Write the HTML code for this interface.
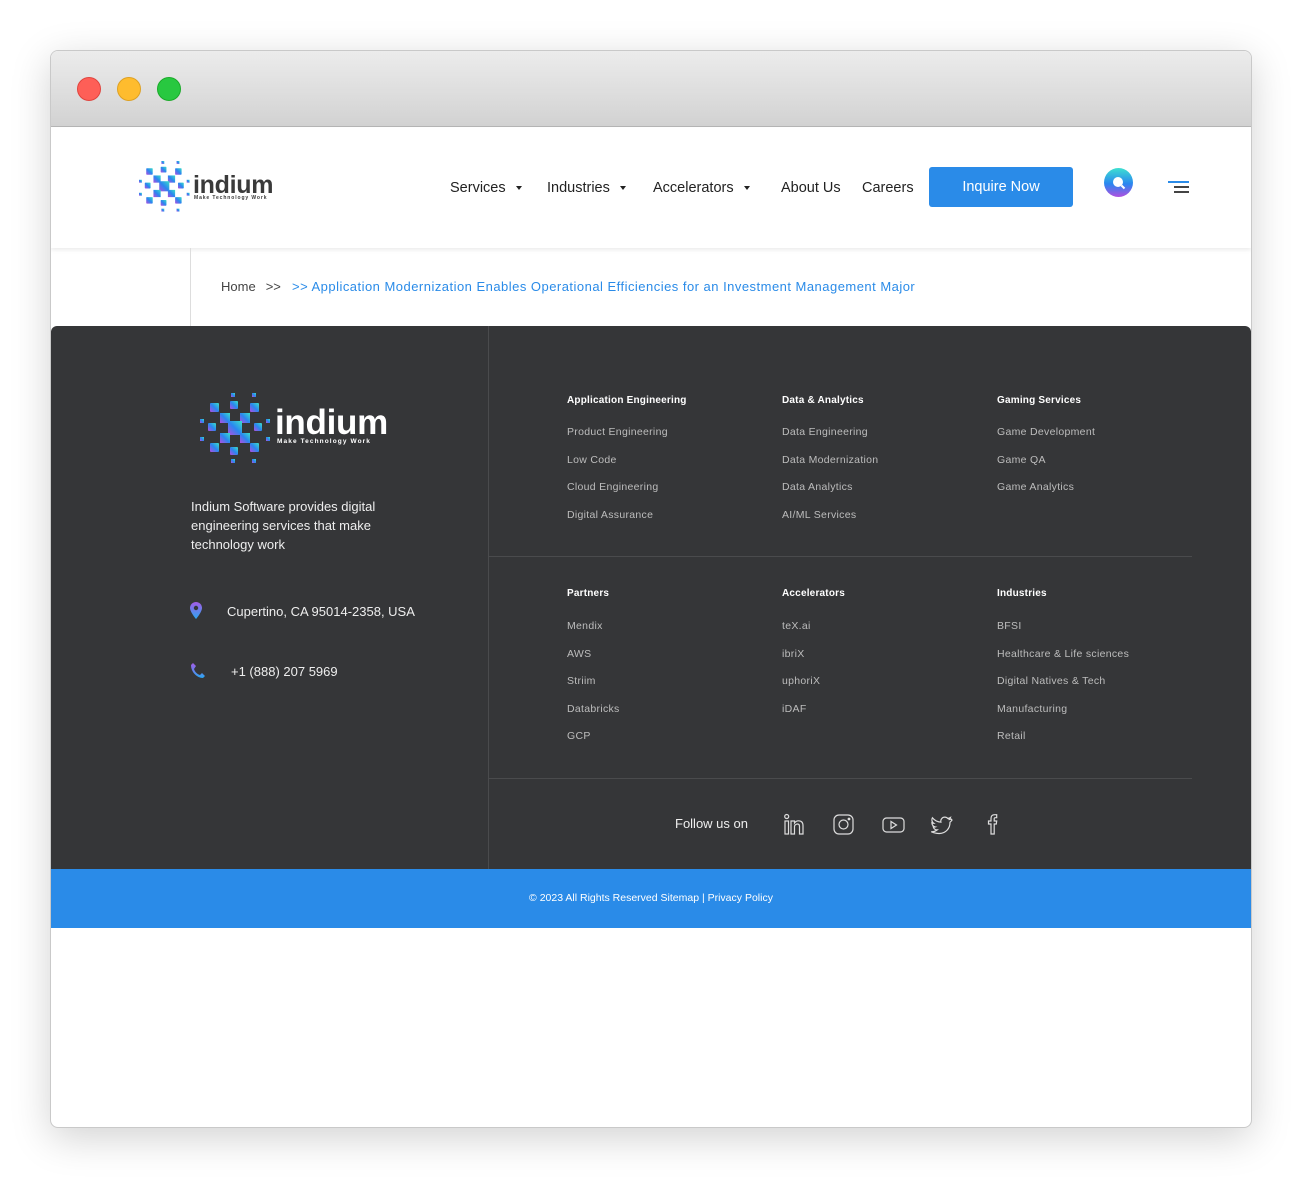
<!DOCTYPE html>
<html><head><meta charset="utf-8"><style>
*{margin:0;padding:0;box-sizing:border-box}
body{width:1302px;height:1178px;background:#fff;font-family:"Liberation Sans",sans-serif;position:relative;overflow:hidden}
.a{position:absolute;white-space:nowrap}
.win{position:absolute;left:50px;top:50px;width:1202px;height:1078px;border:1px solid #c9c9c9;border-radius:8px;overflow:hidden;box-shadow:0 10px 40px rgba(0,0,0,.18);background:#fff}
.tb{position:absolute;left:0;top:0;width:100%;height:76px;background:linear-gradient(#ececec,#d2d2d2);border-bottom:1px solid #b5b5b5}
.dot{position:absolute;top:26px;width:24px;height:24px;border-radius:50%}
.nav{font-size:14.5px;color:#222;top:129px}
.caret{display:inline-block;width:0;height:0;border-left:3px solid transparent;border-right:3px solid transparent;border-top:4px solid #222;margin-left:10px;vertical-align:middle}
.foot{position:absolute;left:0;top:275px;width:100%;height:543px;background:#353638;border-radius:6px 6px 0 0}
.h{font-size:10px;font-weight:bold;color:#fff;letter-spacing:.2px}
.l{font-size:10.5px;color:#bdbdbd;letter-spacing:.3px}
</style></head><body>
<div class="win">
<div class="tb">
<div class="dot" style="left:26px;background:#fe5f57;border:1px solid #e0443e"></div>
<div class="dot" style="left:66px;background:#febc2e;border:1px solid #dea123"></div>
<div class="dot" style="left:106px;background:#28c840;border:1px solid #1aab29"></div>
</div>
<div class="a" style="left:0;top:77px;width:100%;height:120px;background:#fff;box-shadow:0 2px 4px rgba(0,0,0,.08)"></div>
<svg class="a" style="left:88px;top:110px" width="52" height="52" viewBox="0 0 72 72">
<defs><linearGradient id="g" x1="1" y1="0" x2="0" y2="1"><stop offset="0" stop-color="#3be0c8"/><stop offset=".5" stop-color="#2a86f0"/><stop offset="1" stop-color="#b24fe0"/></linearGradient></defs>
<g fill="url(#g)"><rect x="31" y="0" width="4" height="4"/><rect x="52" y="0" width="4" height="4"/><rect x="0" y="26" width="4" height="4"/><rect x="66" y="26" width="4" height="4"/><rect x="0" y="44" width="4" height="4"/><rect x="66" y="44" width="4" height="4"/><rect x="31" y="66" width="4" height="4"/><rect x="52" y="66" width="4" height="4"/>
<rect x="10" y="10" width="9" height="9" rx="1"/><rect x="30" y="8" width="8" height="8" rx="1"/><rect x="50" y="10" width="9" height="9" rx="1"/><rect x="20" y="20" width="10" height="10"/><rect x="40" y="20" width="10" height="10"/><rect x="28" y="28" width="14" height="14"/><rect x="20" y="40" width="10" height="10"/><rect x="40" y="40" width="10" height="10"/><rect x="10" y="50" width="9" height="9" rx="1"/><rect x="30" y="54" width="8" height="8" rx="1"/><rect x="50" y="50" width="9" height="9" rx="1"/><rect x="8" y="30" width="8" height="8" rx="1"/><rect x="54" y="30" width="8" height="8" rx="1"/></g></svg>
<div class="a" style="left:142px;top:120px;font-size:25px;font-weight:bold;color:#3a3a3a;letter-spacing:-.3px">indium</div>
<div class="a" style="left:143px;top:144px;font-size:5px;font-weight:bold;color:#3a3a3a;letter-spacing:.9px">Make Technology Work</div>
<div class="a nav" style="left:399px">Services<span class="caret"></span></div>
<div class="a nav" style="left:496px">Industries<span class="caret"></span></div>
<div class="a nav" style="left:602px">Accelerators<span class="caret"></span></div>
<div class="a nav" style="left:730px">About Us</div>
<div class="a nav" style="left:811px">Careers</div>
<div class="a" style="left:878px;top:116px;width:144px;height:40px;background:#2a8be8;border-radius:3px;color:#fff;font-size:14.5px;text-align:center;line-height:40px">Inquire Now</div>
<div class="a" style="left:1053px;top:117px;width:29px;height:29px;border-radius:50%;background:linear-gradient(#3ee0d0,#2a86f0 55%,#b04fe0)"></div>
<svg class="a" style="left:1059px;top:123px" width="18" height="18" viewBox="0 0 18 18"><circle cx="8" cy="8" r="5" fill="#fff"/><path d="M11.5 11.5l3 3" stroke="#fff" stroke-width="2"/></svg>
<div class="a" style="left:1117px;top:130px;width:21px;height:2px;background:#2a8be8"></div>
<div class="a" style="left:1123px;top:135px;width:15px;height:2px;background:#444"></div>
<div class="a" style="left:1123px;top:140px;width:15px;height:2px;background:#444"></div>
<div class="a" style="left:139px;top:197px;width:1px;height:80px;background:#ddd"></div>
<div class="a" style="left:170px;top:228px;font-size:13px;color:#444">Home<span style="margin-left:10px">&gt;&gt;</span></div>
<div class="a" style="left:241px;top:228px;font-size:13px;color:#2a8be8;letter-spacing:.48px">&gt;&gt; Application Modernization Enables Operational Efficiencies for an Investment Management Major</div>
<div class="foot">
<div class="a" style="left:437px;top:0;width:1px;height:543px;background:#4a4b4d"></div>
<div class="a" style="left:438px;top:230px;width:703px;height:1px;background:#4a4b4d"></div>
<div class="a" style="left:438px;top:452px;width:703px;height:1px;background:#4a4b4d"></div>
<svg class="a" style="left:149px;top:67px" width="72" height="72" viewBox="0 0 72 72">
<g fill="url(#g)"><rect x="31" y="0" width="4" height="4"/><rect x="52" y="0" width="4" height="4"/><rect x="0" y="26" width="4" height="4"/><rect x="66" y="26" width="4" height="4"/><rect x="0" y="44" width="4" height="4"/><rect x="66" y="44" width="4" height="4"/><rect x="31" y="66" width="4" height="4"/><rect x="52" y="66" width="4" height="4"/>
<rect x="10" y="10" width="9" height="9" rx="1"/><rect x="30" y="8" width="8" height="8" rx="1"/><rect x="50" y="10" width="9" height="9" rx="1"/><rect x="20" y="20" width="10" height="10"/><rect x="40" y="20" width="10" height="10"/><rect x="28" y="28" width="14" height="14"/><rect x="20" y="40" width="10" height="10"/><rect x="40" y="40" width="10" height="10"/><rect x="10" y="50" width="9" height="9" rx="1"/><rect x="30" y="54" width="8" height="8" rx="1"/><rect x="50" y="50" width="9" height="9" rx="1"/><rect x="8" y="30" width="8" height="8" rx="1"/><rect x="54" y="30" width="8" height="8" rx="1"/></g></svg>
<div class="a" style="left:224px;top:77px;font-size:35px;font-weight:bold;color:#fff;letter-spacing:-.3px">indium</div>
<div class="a" style="left:226px;top:112px;font-size:6.5px;font-weight:bold;color:#fff;letter-spacing:1.1px">Make Technology Work</div>
<div class="a" style="left:140px;top:171px;font-size:13px;color:#eee;line-height:19px;white-space:normal;width:225px">Indium Software provides digital engineering services that make technology work</div>
<svg class="a" style="left:139px;top:276px" width="12" height="17" viewBox="0 0 12 17"><defs><linearGradient id="p" x1="0" y1="0" x2="0" y2="1"><stop offset="0" stop-color="#a45be6"/><stop offset="1" stop-color="#2aa6f0"/></linearGradient></defs><path d="M6 0a6 6 0 0 0-6 6c0 4 6 11 6 11s6-7 6-11a6 6 0 0 0-6-6z" fill="url(#p)"/><circle cx="6" cy="6" r="2.2" fill="#353638"/></svg>
<div class="a" style="left:176px;top:278px;font-size:13px;color:#eee">Cupertino, CA 95014-2358, USA</div>
<svg class="a" style="left:139px;top:336px" width="17" height="17" viewBox="0 0 17 17"><path d="M3 1l3 3-2 3c1 3 3 5 6 6l2-2 3 3-2 2C7 16 1 10 1 3z" fill="url(#p)"/></svg>
<div class="a" style="left:180px;top:338px;font-size:13px;color:#eee">+1 (888) 207 5969</div>
<div class="a h" style="left:516px;top:69px">Application Engineering</div>
<div class="a l" style="left:516px;top:100px">Product Engineering</div>
<div class="a l" style="left:516px;top:128px">Low Code</div>
<div class="a l" style="left:516px;top:155px">Cloud Engineering</div>
<div class="a l" style="left:516px;top:183px">Digital Assurance</div>
<div class="a h" style="left:731px;top:69px">Data &amp; Analytics</div>
<div class="a l" style="left:731px;top:100px">Data Engineering</div>
<div class="a l" style="left:731px;top:128px">Data Modernization</div>
<div class="a l" style="left:731px;top:155px">Data Analytics</div>
<div class="a l" style="left:731px;top:183px">AI/ML Services</div>
<div class="a h" style="left:946px;top:69px">Gaming Services</div>
<div class="a l" style="left:946px;top:100px">Game Development</div>
<div class="a l" style="left:946px;top:128px">Game QA</div>
<div class="a l" style="left:946px;top:155px">Game Analytics</div>
<div class="a h" style="left:516px;top:262px">Partners</div>
<div class="a l" style="left:516px;top:294px">Mendix</div>
<div class="a l" style="left:516px;top:322px">AWS</div>
<div class="a l" style="left:516px;top:349px">Striim</div>
<div class="a l" style="left:516px;top:377px">Databricks</div>
<div class="a l" style="left:516px;top:404px">GCP</div>
<div class="a h" style="left:731px;top:262px">Accelerators</div>
<div class="a l" style="left:731px;top:294px">teX.ai</div>
<div class="a l" style="left:731px;top:322px">ibriX</div>
<div class="a l" style="left:731px;top:349px">uphoriX</div>
<div class="a l" style="left:731px;top:377px">iDAF</div>
<div class="a h" style="left:946px;top:262px">Industries</div>
<div class="a l" style="left:946px;top:294px">BFSI</div>
<div class="a l" style="left:946px;top:322px">Healthcare &amp; Life sciences</div>
<div class="a l" style="left:946px;top:349px">Digital Natives &amp; Tech</div>
<div class="a l" style="left:946px;top:377px">Manufacturing</div>
<div class="a l" style="left:946px;top:404px">Retail</div>
<div class="a" style="left:624px;top:490px;font-size:13px;color:#eee">Follow us on</div>
<svg class="a" style="left:730px;top:486px" width="230" height="24" viewBox="0 0 230 24" fill="none" stroke="#ddd" stroke-width="1.2">
<rect x="4" y="9" width="3.5" height="13"/><circle cx="5.7" cy="4.5" r="2"/><path d="M10 22V9h3.5v2c1-1.5 2.5-2.2 4-2.2 3 0 4.5 2 4.5 5V22h-3.5v-7.5c0-1.5-.8-2.5-2-2.5s-3 1-3 2.5V22z"/>
<rect x="53" y="3" width="19" height="19" rx="5"/><circle cx="62.5" cy="12.5" r="4.5"/><circle cx="68" cy="7" r=".8" fill="#ddd"/>
<rect x="102" y="6" width="21" height="14" rx="3.5"/><path d="M110 9.5v7l5.5-3.5z"/>
<path d="M170 7c-.8.4-1.6.6-2.4.7.9-.5 1.5-1.3 1.8-2.2-.8.5-1.7.8-2.6 1-1.6-1.8-4.5-1.8-6 0-.9 1-1.2 2.4-.9 3.7-3.3-.2-6.4-1.8-8.5-4.4-1.1 1.9-.5 4.3 1.3 5.5-.6 0-1.3-.2-1.8-.5 0 2 1.4 3.7 3.3 4.1-.6.2-1.3.2-1.9.1.5 1.7 2.1 2.9 3.9 2.9-1.7 1.3-3.9 2-6 1.8C153.3 21 156 21.7 158.7 21.5c6-.3 10.4-5 10.3-11.3.8-.6 1.5-1.3 2-2.1z"/>
<path d="M210 22V12h-2.5V9H210V6.5c0-2.5 1.3-3.8 3.7-3.8h2v3h-1.5c-.8 0-1 .4-1 1.2V9h2.5l-.4 3H213.2v10z"/>
</svg>
</div>
<div class="a" style="left:0;top:818px;width:100%;height:59px;background:#2a8be8"></div>
<div class="a" style="left:0;top:841px;width:100%;text-align:center;font-size:10.5px;color:#fff">© 2023 All Rights Reserved Sitemap | Privacy Policy</div>
</div>
</body></html>
